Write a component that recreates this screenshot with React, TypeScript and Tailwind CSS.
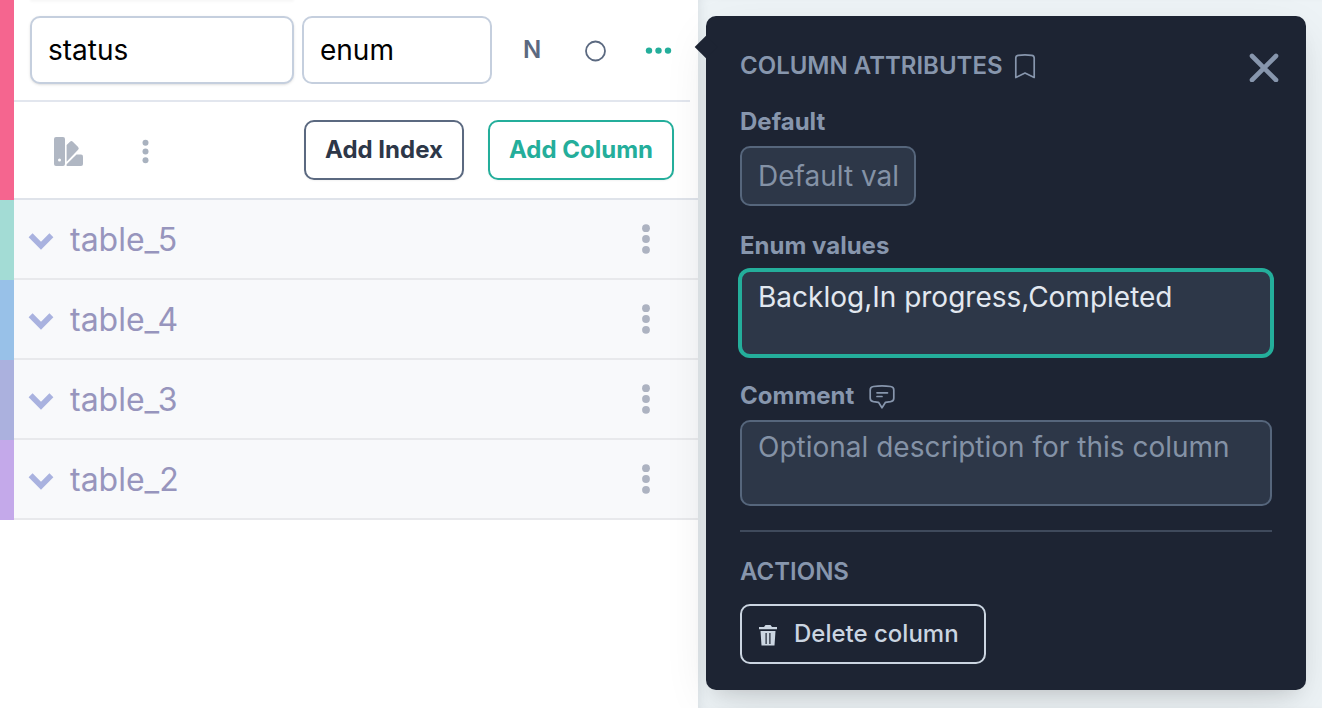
import React from "react";

const collapsedTables = [
  { name: "table_5", bar: "border-[#a3dcd5]" },
  { name: "table_4", bar: "border-[#98c1e8]" },
  { name: "table_3", bar: "border-[#abb1de]" },
  { name: "table_2", bar: "border-[#c4a9ea]" },
];

function SwatchIcon() {
  return (
    <svg className="h-8 w-8" viewBox="0 0 32 32" fill="#b0b7c3" aria-hidden="true">
      <path
        fillRule="evenodd"
        d="M4 1h7a2 2 0 0 1 2 2v25a2 2 0 0 1-2 2H4a2 2 0 0 1-2-2V3a2 2 0 0 1 2-2zM7.500 22.500a1.500 1.500 0 1 0 0 3 1.500 1.500 0 0 0 0-3z"
      />
      <path d="M14.600 9l3.400-3.200a2 2 0 0 1 2.800 0l5.300 5.200a2 2 0 0 1 0 2.800L14.600 25.800z" />
      <path d="M14.600 30V28.300l9.900-9.800H29a2 2 0 0 1 2 2V28a2 2 0 0 1-2 2z" />
    </svg>
  );
}

function BookmarkIcon() {
  return (
    <svg className="h-7 w-6" viewBox="0 0 24 28" fill="none" stroke="#8796ad" strokeWidth="1.700" strokeLinejoin="round" aria-hidden="true">
      <path d="M2.800 25.500V6c0-1.500.8-2.500 2.500-2.700 4.400-.5 8.900-.5 13.300 0 1.700.2 2.600 1.200 2.600 2.700v19.500L12 21z" />
    </svg>
  );
}

function CommentIcon() {
  return (
    <svg className="h-7 w-7" viewBox="0 0 28 28" fill="none" stroke="#8796ad" strokeWidth="1.700" strokeLinejoin="round" strokeLinecap="round" aria-hidden="true">
      <path d="M5.500 4.500C11 3.800 17 3.800 22.500 4.500c2 .3 3.300 1.500 3.300 3.400v8.400c0 1.900-1.300 3.100-3.300 3.400l-5 .6L14 25.800l-3.500-5.500-5-.6c-2-.3-3.300-1.500-3.300-3.400V7.900C2.200 6 3.500 4.800 5.500 4.500z" />
      <path d="M9 10.800h10.500M9 14.500h5" />
    </svg>
  );
}

function TrashIcon() {
  return (
    <svg className="mt-1 h-6 w-5" viewBox="0 0 20 24" fill="#cbd5e1" aria-hidden="true">
      <path d="M1 3h5l1.500-2h5L14 3h5v2.200H1z" />
      <path fillRule="evenodd" d="M2.500 7h15l-1 14.500h-13zM7.500 9v11h1.200V9zM11.300 9v11h1.200V9z" />
    </svg>
  );
}

function Sidebar() {
  return (
    <aside className="w-[698px] shrink-0 bg-white">
      <section className="border-l-[14px] border-[#f5658f]">
        <div className="px-4">
          <div className="-mt-px h-px w-[264px] rounded-b-lg shadow-sm" />
        </div>
        <div className="mr-2 flex items-center gap-2 border-b-2 border-[#e2e6ee] pt-4 pb-4 pl-4">
          <input
            aria-label="Column name"
            defaultValue="status"
            className="h-[68px] w-[264px] rounded-[10px] border-2 border-[#c5cfde] bg-white px-4 text-[28px] text-black shadow-sm outline-none"
          />
          <input
            aria-label="Column type"
            defaultValue="enum"
            className="h-[68px] w-[190px] rounded-[10px] border-2 border-[#c5cfde] bg-white px-4 text-[28px] text-black outline-none"
          />
          <div className="flex flex-1 items-center gap-4 pr-4 pl-2">
            <button type="button" aria-label="Nullable" className="w-12 text-2xl font-semibold text-[#5b6980]">
              N
            </button>
            <button type="button" aria-label="Key" className="flex w-12 justify-center">
              <svg className="h-6 w-6" viewBox="0 0 24 24" fill="none" stroke="#5b6980" strokeWidth="1.800" aria-hidden="true">
                <circle cx="11.500" cy="13" r="9.500" />
              </svg>
            </button>
            <button type="button" aria-label="Column attributes" className="ml-auto flex w-8 justify-center">
              <svg className="h-6 w-8" viewBox="0 0 32 24" fill="#24ae9b" aria-hidden="true">
                <circle cx="7" cy="12.600" r="3.200" />
                <circle cx="16.500" cy="12.600" r="3.200" />
                <circle cx="26" cy="12.600" r="3.200" />
              </svg>
            </button>
          </div>
        </div>
        <div className="flex h-[98px] items-center border-b-2 border-[#dfe3ea] pr-6 pl-[38px]">
          <button type="button" aria-label="Table colour" className="pt-1">
            <SwatchIcon />
          </button>
          <button type="button" aria-label="Table options" className="ml-[50px] pt-1">
            <svg className="h-8 w-6" viewBox="0 0 24 32" fill="#a9b2bf" aria-hidden="true">
              <circle cx="11.500" cy="6.800" r="3" />
              <circle cx="11.500" cy="15.500" r="3" />
              <circle cx="11.500" cy="24.200" r="3" />
            </svg>
          </button>
          <div className="ml-auto flex gap-6">
            <button type="button" className="h-[60px] w-40 rounded-[10px] border-2 border-[#5b6980] text-2xl font-bold whitespace-nowrap text-[#2d3748] shadow-xs">
              Add Index
            </button>
            <button type="button" className="h-[60px] w-[186px] rounded-[10px] border-2 border-[#24ae9b] text-2xl font-bold whitespace-nowrap text-[#24ae9b] shadow-xs">
              Add Column
            </button>
          </div>
        </div>
      </section>
      {collapsedTables.map((table) => (
        <section key={table.name} className={`border-l-[14px] ${table.bar}`}>
          <div className="flex h-20 items-center border-b-2 border-[#e8e9ec] bg-[#f8f9fb] pr-10 pl-[14px]">
            <button type="button" className="flex items-center gap-4 pt-0.5 text-[32px] leading-10 text-[#9795bd]">
              <svg className="h-6 w-[26px]" viewBox="0 0 26 24" fill="none" stroke="#a9b2df" strokeWidth="5.600" aria-hidden="true">
                <path d="M2.600 7.300L13 17.700 23.400 7.300" />
              </svg>
              {table.name}
            </button>
            <button type="button" aria-label={`${table.name} options`} className="ml-auto">
              <svg className="h-8 w-6" viewBox="0 0 24 32" fill="#adb3c1" aria-hidden="true">
                <circle cx="12" cy="5.200" r="3.900" />
                <circle cx="12" cy="16" r="3.900" />
                <circle cx="12" cy="26.800" r="3.900" />
              </svg>
            </button>
          </div>
        </section>
      ))}
    </aside>
  );
}

const labelText = "flex h-9 items-center text-2xl font-bold text-[#8796ad]";
const fieldBox =
  "block resize-none rounded-[10px] border-2 border-[#56667c] bg-[#2d3748] px-4 text-[28px] text-[#e2e8f0] outline-none placeholder:text-[#8492a6]";

function AttributesPanel() {
  return (
    <div
      role="dialog"
      aria-labelledby="attributes-title"
      className="relative mt-4 mr-4 ml-2 min-w-0 flex-1 self-start rounded-[10px] bg-[#1d2433] px-[34px] pt-8 pb-[26px] shadow-[0_16px_50px_-8px_rgba(0,0,0,0.12),0_10px_20px_-10px_rgba(0,0,0,0.14)]"
    >
      <div className="absolute top-[23px] -left-2 h-4 w-4 rotate-45 bg-[#1d2433]" />
      <header className="flex h-9 items-center gap-2.5">
        <h2 id="attributes-title" className="text-2xl font-semibold text-[#8796ad]">
          COLUMN ATTRIBUTES
        </h2>
        <BookmarkIcon />
        <button type="button" aria-label="Close" className="-mr-2 ml-auto">
          <svg className="h-8 w-8" viewBox="0 0 32 32" stroke="#8796ad" strokeWidth="4.600" strokeLinecap="round" aria-hidden="true">
            <path d="M4 6L28 30M28 6L4 30" />
          </svg>
        </button>
      </header>
      <form>
        <div className="mt-5">
          <label htmlFor="default" className={labelText}>
            Default
          </label>
          <input id="default" placeholder="Default val" className={`${fieldBox} mt-1.5 h-[60px] w-44`} />
        </div>
        <div className="mt-[22px]">
          <label htmlFor="enum-values" className={labelText}>
            Enum values
          </label>
          <textarea
            id="enum-values"
            defaultValue="Backlog,In progress,Completed"
            className="mt-1.5 block h-[86px] w-full resize-none rounded-[10px] border-2 border-[#24ae9b] bg-[#2d3748] px-4 py-1 text-[28px] leading-[42px] text-[#e2e8f0] ring-2 ring-[#24ae9b] outline-none"
          />
        </div>
        <div className="mt-[22px]">
          <label htmlFor="comment" className={`${labelText} gap-3.5`}>
            Comment
            <CommentIcon />
          </label>
          <textarea
            id="comment"
            placeholder="Optional description for this column"
            className={`${fieldBox} mt-1.5 h-[86px] w-full py-1 leading-[42px]`}
          />
        </div>
      </form>
      <hr className="mt-6 border-t-2 border-[#3f4a5c]" />
      <h3 className="mt-[22px] flex h-9 items-center text-2xl font-semibold text-[#8796ad]">ACTIONS</h3>
      <button
        type="button"
        className="mt-3.5 flex h-[60px] w-[246px] items-center gap-4 rounded-[10px] border-2 border-[#cbd5e1] pl-4 text-2xl font-medium whitespace-nowrap text-[#cbd5e1]"
      >
        <TrashIcon />
        Delete column
      </button>
    </div>
  );
}

export default function App() {
  return (
    <div className="flex min-h-screen bg-[#edf3f6] font-['Inter',sans-serif] [font-optical-sizing:none]">
      <Sidebar />
      <main className="flex min-w-0 flex-1 shadow-[inset_8px_0_12px_-8px_rgba(30,41,59,0.12)]">
        <AttributesPanel />
      </main>
    </div>
  );
}
